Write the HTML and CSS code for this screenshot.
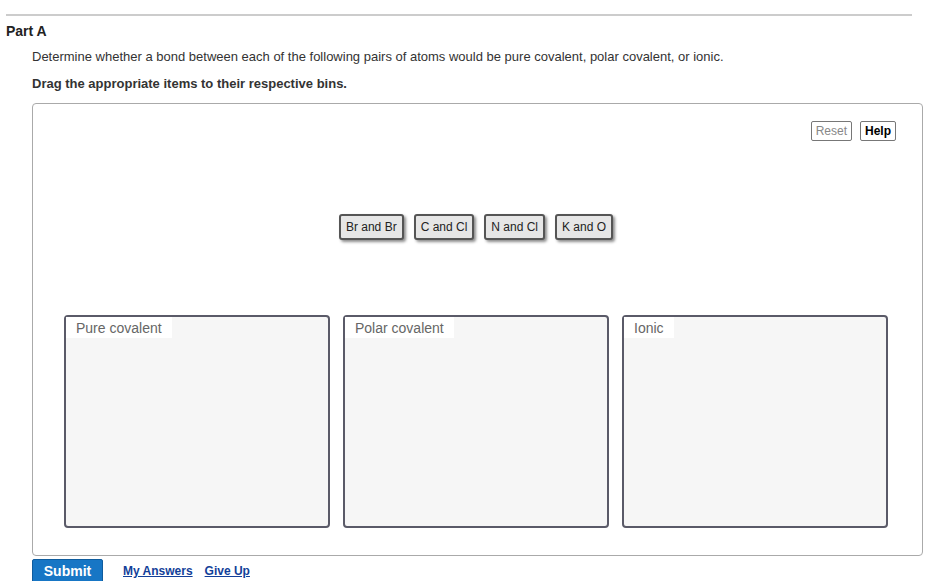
FILE: index.html
```html
<!DOCTYPE html>
<html lang="en">
<head>
  <meta charset="UTF-8">
  <title>Part A</title>
  <link rel="stylesheet" href="styles.css">
</head>
<body>
  <div class="page">
    <div class="rule"></div>
    <h2 class="part-title">Part A</h2>
    <div class="part-body">
      <p class="prompt">Determine whether a bond between each of the following pairs of atoms would be pure covalent, polar covalent, or ionic.</p>
      <p class="instructions">Drag the appropriate items to their respective bins.</p>

      <div class="dnd-box">
        <div class="toolbar">
          <button class="tool-btn reset" type="button">Reset</button>
          <button class="tool-btn help" type="button">Help</button>
        </div>

        <div class="items">
          <div class="item">Br and Br</div>
          <div class="item">C and Cl</div>
          <div class="item">N and Cl</div>
          <div class="item">K and O</div>
        </div>

        <div class="bins">
          <div class="bin"><span class="bin-label">Pure covalent</span></div>
          <div class="bin"><span class="bin-label">Polar covalent</span></div>
          <div class="bin"><span class="bin-label">Ionic</span></div>
        </div>
      </div>

      <div class="actions">
        <button class="submit" type="button">Submit</button>
        <a class="action-link" href="#">My Answers</a>
        <a class="action-link" href="#">Give Up</a>
      </div>
    </div>
  </div>
</body>
</html>
```

FILE: styles.css
```css
body {
  margin: 0;
  font-family: Arial, "Liberation Sans", sans-serif;
  color: #333;
  background: #fff;
}
.page {
  padding: 14px 0 0 6px;
}
.rule {
  width: 906px;
  height: 2px;
  background: #ccc;
}
.part-title {
  margin: 7px 0 0;
  font-size: 14px;
  line-height: 16px;
  color: #222;
}
.part-body {
  padding-left: 26px;
}
.prompt {
  margin: 11px 0 0;
  font-size: 13px;
  line-height: 14px;
}
.instructions {
  margin: 12px 0 0;
  font-size: 13px;
  line-height: 15px;
  font-weight: bold;
}
.dnd-box {
  margin-top: 12px;
  width: 889px;
  height: 451px;
  border: 1px solid #aaa;
  border-radius: 4px;
}
.toolbar {
  display: flex;
  justify-content: flex-end;
  gap: 8px;
  padding: 17px 26px 0 0;
}
.tool-btn {
  height: 20px;
  padding: 0 4px;
  font-family: Arial, "Liberation Sans", sans-serif;
  font-size: 12px;
  background: #fff;
  border: 1px solid #777;
  border-radius: 2px;
}
.reset {
  color: #888;
}
.help {
  color: #000;
  font-weight: bold;
}
.items {
  display: flex;
  justify-content: center;
  gap: 10px;
  margin-top: 73px;
  padding-right: 3px;
}
.item {
  height: 22px;
  line-height: 22px;
  padding: 0 5px;
  font-size: 12px;
  color: #222;
  background: #e6e6e6;
  border: 2px solid #555;
  border-radius: 3px;
  box-shadow: 2px 2px 3px rgba(0, 0, 0, 0.45);
}
.bins {
  display: flex;
  gap: 13px;
  margin: 75px 0 0 31px;
}
.bin {
  width: 262px;
  height: 209px;
  background: #f6f6f6;
  border: 2px solid #5a5a68;
  border-radius: 4px;
}
.bin-label {
  display: inline-block;
  height: 19px;
  padding: 2px 10px 0;
  line-height: 19px;
  font-size: 14px;
  color: #666;
  background: #fff;
}
.actions {
  display: flex;
  align-items: center;
  gap: 12px;
  margin-top: 3px;
}
.submit {
  width: 71px;
  height: 24px;
  margin-right: 8px;
  font-family: Arial, "Liberation Sans", sans-serif;
  font-size: 14px;
  font-weight: bold;
  color: #fff;
  background: #1776c5;
  border: 1px solid #0f5c9e;
  border-radius: 2px;
}
.action-link {
  font-size: 12px;
  font-weight: bold;
  color: #133f99;
}
```
